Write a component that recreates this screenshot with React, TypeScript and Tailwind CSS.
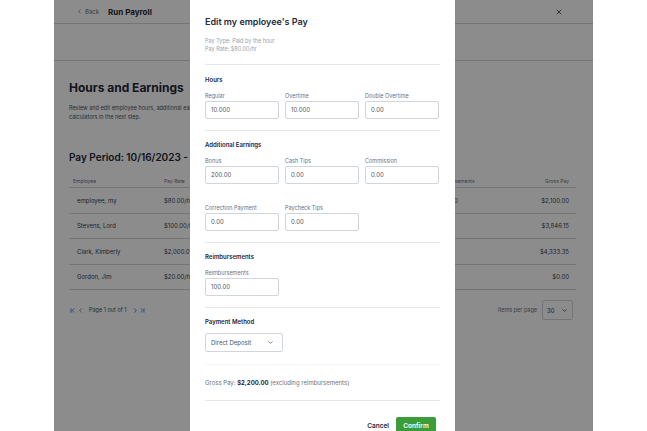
import { ChevronDown, ChevronFirst, ChevronLast, ChevronLeft, ChevronRight, X } from "lucide-react";

const rows = [
  { name: "employee, my", rate: "$80.00/hr", reimb: "$100.00", gross: "$2,100.00" },
  { name: "Stevens, Lord", rate: "$100.00/hr", reimb: "$0.00", gross: "$3,846.15" },
  { name: "Clark, Kimberly", rate: "$2,000.00/wk", reimb: "$0.00", gross: "$4,333.35" },
  { name: "Gordon, Jim", rate: "$20.00/hr", reimb: "$0.00", gross: "$0.00" },
];

function Field({ label, value }: { label: string; value: string }) {
  return (
    <div className="w-[74px]">
      <div className="text-[5.5px] leading-[8px] text-gray-500">{label}</div>
      <div className="mt-[1px] flex h-[18px] items-center rounded-[2px] border border-gray-300 px-[5px] text-[6px] leading-[8px] text-gray-600">
        {value}
      </div>
    </div>
  );
}

function SectionTitle({ children }: { children: string }) {
  return <div className="text-[6px] font-semibold leading-[8px] text-gray-800">{children}</div>;
}

function Payroll() {
  return (
    <div className="flex h-full flex-col bg-white text-gray-800">
      <div className="flex h-[24px] shrink-0 items-center border-b border-gray-300 pl-[22px] pr-[30px]">
        <ChevronLeft size={7} strokeWidth={2.5} className="text-gray-500" />
        <span className="ml-[2px] text-[6px] text-gray-500">Back</span>
        <span className="ml-[9px] text-[8px] font-bold">Run Payroll</span>
        <X size={8} strokeWidth={2.5} className="ml-auto text-gray-700" />
      </div>
      <div className="h-[37px] shrink-0 border-b border-gray-300" />
      <div className="px-[15px]">
        <div className="mt-[19px] text-[12px] font-bold leading-[16px]">Hours and Earnings</div>
        <div className="mt-[8px] text-[5.5px] leading-[9px] text-gray-600">
          Review and edit employee hours, additional earnings and reimbursements.
          <br />
          calculators in the next step.
        </div>
        <div className="mt-[28px] text-[10px] font-semibold leading-[14px]">Pay Period: 10/16/2023 - 10/31/2023</div>
        <div className="mt-[12px] w-[507px]">
          <div className="flex h-[12px] items-center border-b border-gray-300 px-[4px] text-[5px] text-gray-500">
            <span className="w-[91px]">Employee</span>
            <span className="w-[271px]">Pay Rate</span>
            <span>Reimbursements</span>
            <span className="ml-auto pr-[3px]">Gross Pay</span>
          </div>
          {rows.map((r) => (
            <div key={r.name} className="flex h-[25.5px] items-center border-b border-gray-300 px-[4px] text-[6px] text-gray-700">
              <span className="w-[91px] pl-[4px]">{r.name}</span>
              <span className="w-[271px]">{r.rate}</span>
              <span>{r.reimb}</span>
              <span className="ml-auto pr-[3px]">{r.gross}</span>
            </div>
          ))}
          <div className="mt-[10px] flex h-[20px] items-center text-[5.5px] text-gray-600">
            <ChevronFirst size={7} strokeWidth={2.5} className="text-blue-600" />
            <ChevronLeft size={7} strokeWidth={2.5} className="ml-[1px] text-gray-500" />
            <span className="ml-[5px]">Page 1 out of 1</span>
            <ChevronRight size={7} strokeWidth={2.5} className="ml-[5px] text-blue-600" />
            <ChevronLast size={7} strokeWidth={2.5} className="text-blue-600" />
            <span className="ml-auto text-gray-500">Items per page</span>
            <div className="ml-[5px] mr-[3px] flex h-[20px] w-[31px] items-center justify-between rounded-[2px] border border-gray-300 px-[4px] text-[6px] text-gray-700">
              30
              <ChevronDown size={7} strokeWidth={2.5} />
            </div>
          </div>
        </div>
      </div>
    </div>
  );
}

function Modal() {
  return (
    <div className="absolute inset-y-0 left-[136px] w-[265px] bg-white px-[15px] text-gray-800">
      <div className="mt-[16px] text-[9px] font-semibold leading-[11px]">Edit my employee's Pay</div>
      <div className="mt-[10px] text-[5.5px] leading-[8px] text-gray-400">
        Pay Type: Paid by the hour
        <br />
        Pay Rate: $80.00/hr
      </div>
      <div className="mt-[11px] border-t border-gray-200" />

      <div className="mt-[11px]">
        <SectionTitle>Hours</SectionTitle>
      </div>
      <div className="mt-[8px] flex gap-[6px]">
        <Field label="Regular" value="10.000" />
        <Field label="Overtime" value="10.000" />
        <Field label="Double Overtime" value="0.00" />
      </div>
      <div className="mt-[11px] border-t border-gray-200" />

      <div className="mt-[10px]">
        <SectionTitle>Additional Earnings</SectionTitle>
      </div>
      <div className="mt-[8px] flex gap-[6px]">
        <Field label="Bonus" value="200.00" />
        <Field label="Cash Tips" value="0.00" />
        <Field label="Commission" value="0.00" />
      </div>
      <div className="mt-[20px] flex gap-[6px]">
        <Field label="Correction Payment" value="0.00" />
        <Field label="Paycheck Tips" value="0.00" />
      </div>
      <div className="mt-[11px] border-t border-gray-200" />

      <div className="mt-[10px]">
        <SectionTitle>Reimbursements</SectionTitle>
      </div>
      <div className="mt-[8px] flex">
        <Field label="Reimbursements" value="100.00" />
      </div>
      <div className="mt-[11px] border-t border-gray-200" />

      <div className="mt-[10px]">
        <SectionTitle>Payment Method</SectionTitle>
      </div>
      <div className="mt-[7px] flex h-[19px] w-[78px] items-center justify-between rounded-[2px] border border-gray-300 pl-[5px] pr-[8px] text-[6px] text-gray-600">
        Direct Deposit
        <ChevronDown size={7} strokeWidth={2.5} className="text-gray-600" />
      </div>
      <div className="mt-[12px] border-t border-gray-100" />

      <div className="mt-[14px] text-[6px] leading-[8px] text-gray-500">
        Gross Pay: <span className="font-bold text-gray-800">$2,200.00</span> (excluding reimbursements)
      </div>
      <div className="mt-[13px] border-t border-gray-200" />

      <div className="mt-[16px] flex items-center justify-end gap-[7px] pr-[4px]">
        <span className="text-[6.5px] font-semibold text-gray-800">Cancel</span>
        <div className="flex h-[20px] w-[40px] items-center justify-center rounded-[2px] bg-[#3a9d3a] text-[6.5px] font-semibold text-white">
          Confirm
        </div>
      </div>
    </div>
  );
}

export default function App() {
  return (
    <div className="flex h-[431px] w-full justify-center overflow-hidden bg-white font-['Inter',sans-serif]">
      <div className="relative h-full w-[539px] overflow-hidden">
        <Payroll />
        <div className="absolute inset-0 bg-black/45" />
        <Modal />
      </div>
    </div>
  );
}
